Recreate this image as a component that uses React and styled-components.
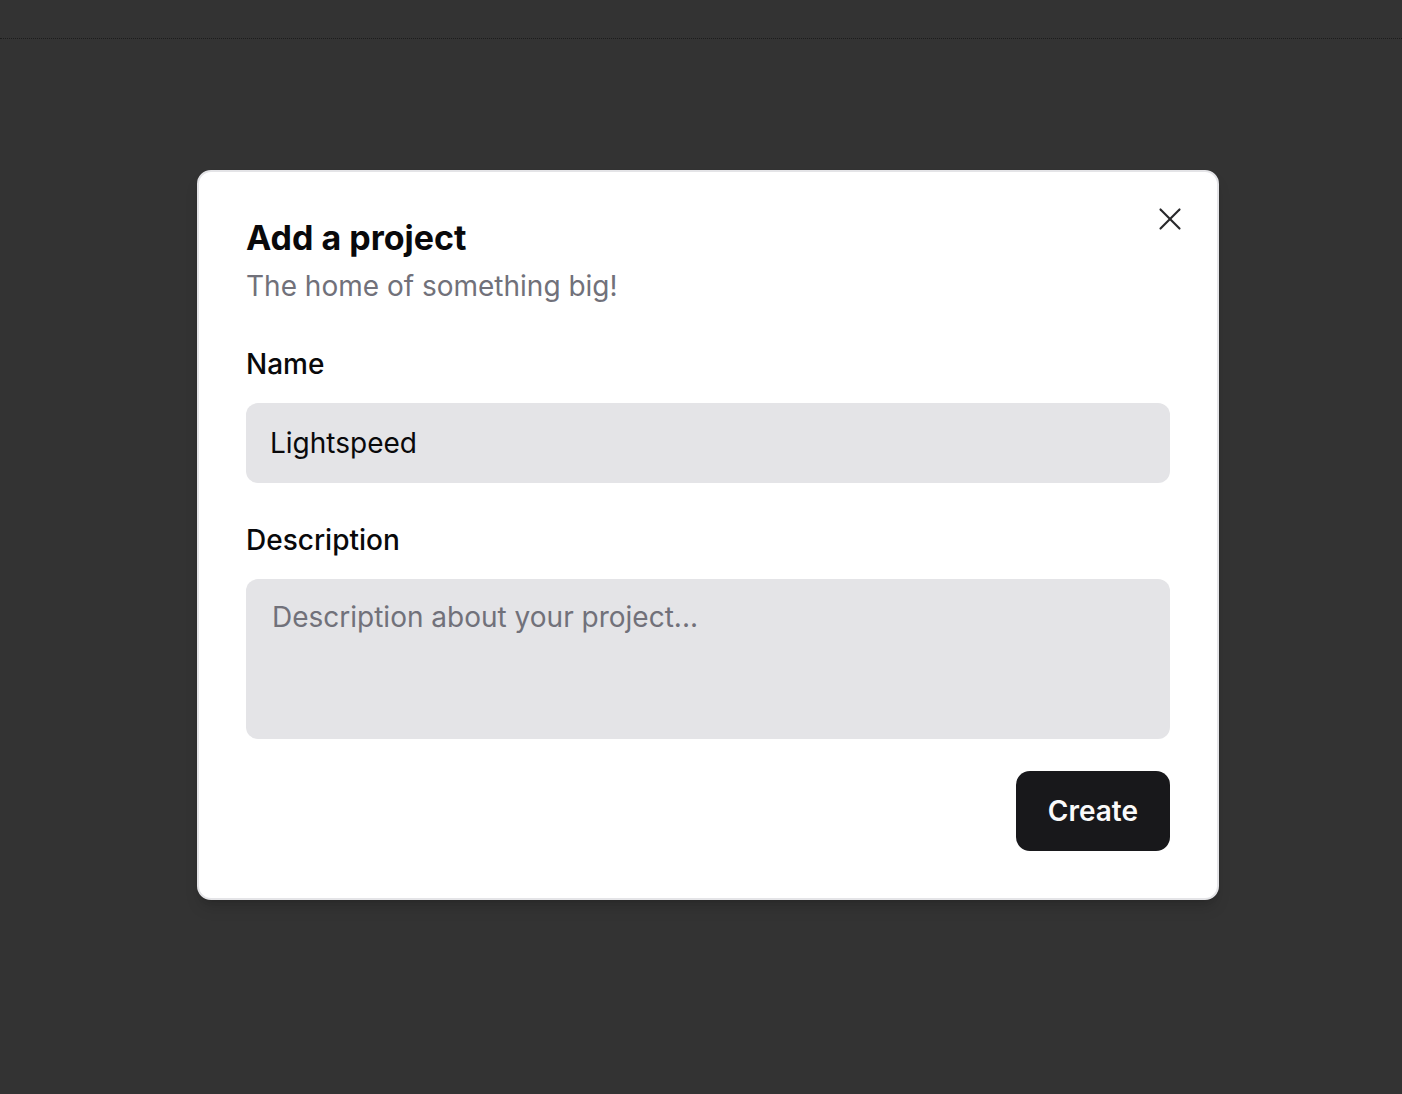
import React, { useState } from 'react';
import styled, { createGlobalStyle } from 'styled-components';

const GlobalStyle = createGlobalStyle`
  html, body {
    margin: 0;
    padding: 0;
    background: #333333;
  }
  body {
    font-family: Inter, 'Noto Sans', sans-serif;
    -webkit-font-smoothing: antialiased;
  }
`;

const Page = styled.div`
  min-height: 1094px;
  background: #333333;
  display: flex;
  flex-direction: column;
`;

const TopBar = styled.header`
  height: 38px;
  border-bottom: 1px dotted #1c1c1c;
`;

const Overlay = styled.div`
  display: flex;
  justify-content: center;
  padding: 131px 0 0 14px;
`;

const Dialog = styled.div`
  position: relative;
  width: 1022px;
  box-sizing: border-box;
  background: #fff;
  border: 2px solid #e4e4e7;
  border-radius: 14px;
  padding: 46px 47px 47px;
  box-shadow: 0 10px 15px -3px rgba(0, 0, 0, 0.15), 0 4px 6px -4px rgba(0, 0, 0, 0.15);
  display: flex;
  flex-direction: column;
`;

const CloseButton = styled.button`
  position: absolute;
  top: 28px;
  right: 28px;
  width: 38px;
  height: 38px;
  padding: 0;
  border: none;
  background: transparent;
  color: #27272a;
  display: flex;
  align-items: center;
  justify-content: center;
  cursor: pointer;
`;

const Title = styled.h2`
  margin: 0;
  font-size: 34px;
  line-height: 40px;
  font-weight: 700;
  color: #09090b;
`;

const Subtitle = styled.p`
  margin: 12px 0 0;
  font-size: 28px;
  line-height: 32px;
  color: #71717a;
`;

const Form = styled.form`
  display: flex;
  flex-direction: column;
  margin-top: 46px;
`;

const Field = styled.div`
  display: flex;
  flex-direction: column;
  gap: 23px;
  margin-top: ${p => (p.$first ? 0 : 41)}px;
`;

const Label = styled.label`
  font-size: 28px;
  line-height: 32px;
  font-weight: 500;
  color: #09090b;
`;

const inputBase = `
  box-sizing: border-box;
  width: 100%;
  border: none;
  outline: none;
  background: #e4e4e7;
  border-radius: 12px;
  font-family: Inter, 'Noto Sans', sans-serif;
  font-size: 28px;
  color: #09090b;
  &::placeholder {
    color: #71717a;
  }
`;

const TextInput = styled.input`
  ${inputBase}
  height: 80px;
  padding: 0 24px;
  caret-color: #09090b;
`;

const TextArea = styled.textarea`
  ${inputBase}
  height: 160px;
  padding: 20px 26px;
  line-height: 36px;
  resize: none;
`;

const Footer = styled.div`
  display: flex;
  justify-content: flex-end;
  margin-top: 32px;
`;

const PrimaryButton = styled.button`
  height: 80px;
  padding: 0 32px;
  border: none;
  border-radius: 14px;
  background: #18181b;
  color: #fafafa;
  font-family: Inter, 'Noto Sans', sans-serif;
  font-size: 28px;
  font-weight: 600;
  cursor: pointer;
`;

function CloseIcon() {
  return (
    <svg width="38" height="38" viewBox="0 0 24 24" fill="none" stroke="currentColor" strokeWidth="1.35" strokeLinecap="round">
      <path d="M18 6 6 18" />
      <path d="m6 6 12 12" />
    </svg>
  );
}

export default function App() {
  const [name, setName] = useState('Lightspeed');
  const [description, setDescription] = useState('');

  return (
    <Page>
      <GlobalStyle />
      <TopBar />
      <Overlay>
        <Dialog role="dialog" aria-labelledby="add-project-title">
          <CloseButton type="button" aria-label="Close">
            <CloseIcon />
          </CloseButton>
          <Title id="add-project-title">Add a project</Title>
          <Subtitle>The home of something big!</Subtitle>
          <Form onSubmit={e => e.preventDefault()}>
            <Field $first>
              <Label htmlFor="project-name">Name</Label>
              <TextInput
                id="project-name"
                value={name}
                onChange={e => setName(e.target.value)}
                autoFocus
              />
            </Field>
            <Field>
              <Label htmlFor="project-description">Description</Label>
              <TextArea
                id="project-description"
                placeholder="Description about your project..."
                value={description}
                onChange={e => setDescription(e.target.value)}
              />
            </Field>
            <Footer>
              <PrimaryButton type="submit">Create</PrimaryButton>
            </Footer>
          </Form>
        </Dialog>
      </Overlay>
    </Page>
  );
}
